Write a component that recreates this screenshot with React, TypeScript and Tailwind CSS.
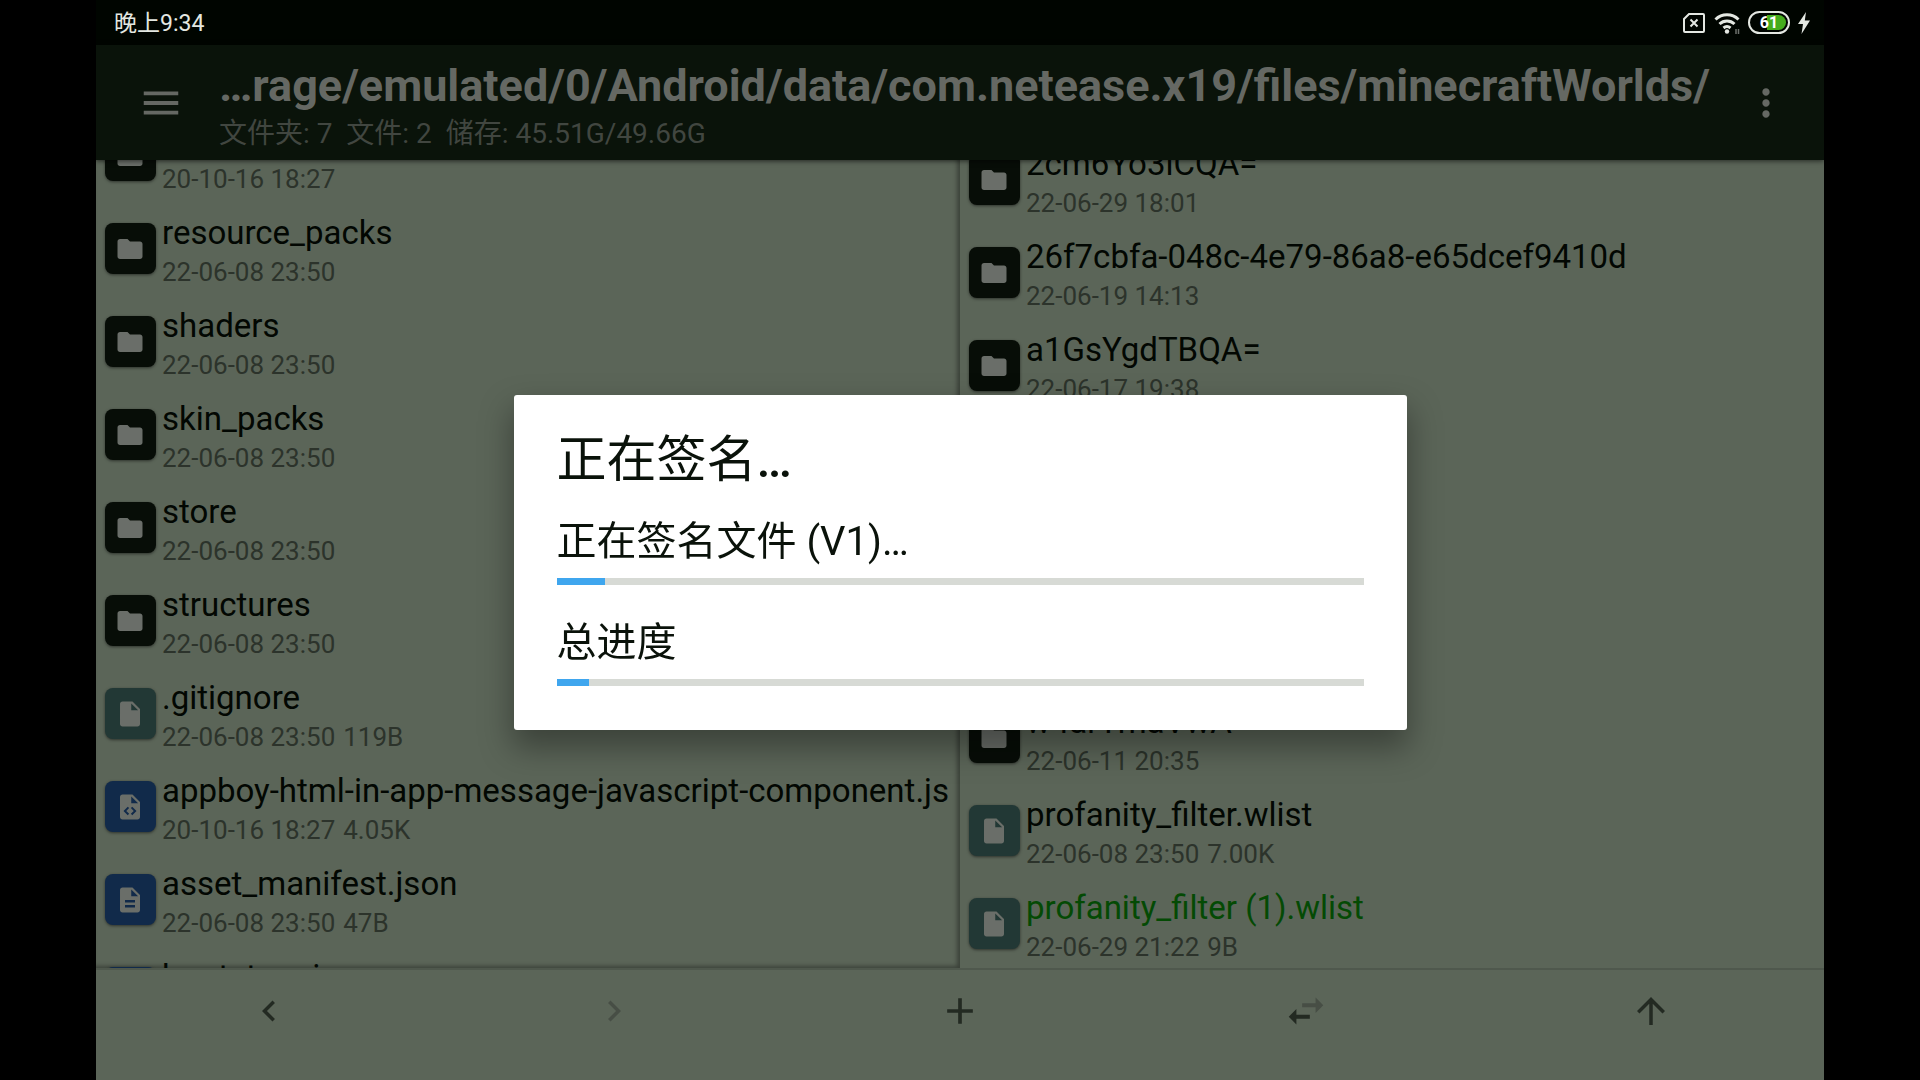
import { MdAdd, MdArrowUpward, MdChevronLeft, MdChevronRight, MdFolder, MdInsertDriveFile, MdDescription, MdMenu, MdMoreVert } from "react-icons/md";

type Kind = "folder" | "file" | "code" | "text";

interface Entry {
  kind: Kind;
  name: string;
  date: string;
  size?: string;
  added?: boolean;
}

const leftEntries: Entry[] = [
  { kind: "folder", name: "", date: "20-10-16 18:27" },
  { kind: "folder", name: "resource_packs", date: "22-06-08 23:50" },
  { kind: "folder", name: "shaders", date: "22-06-08 23:50" },
  { kind: "folder", name: "skin_packs", date: "22-06-08 23:50" },
  { kind: "folder", name: "store", date: "22-06-08 23:50" },
  { kind: "folder", name: "structures", date: "22-06-08 23:50" },
  { kind: "file", name: ".gitignore", date: "22-06-08 23:50", size: "119B" },
  { kind: "code", name: "appboy-html-in-app-message-javascript-component.js", date: "20-10-16 18:27", size: "4.05K" },
  { kind: "text", name: "asset_manifest.json", date: "22-06-08 23:50", size: "47B" },
  { kind: "text", name: "bootstrap.js", date: "" },
];

const rightEntries: Entry[] = [
  { kind: "folder", name: "2cm6Yo3lCQA=", date: "22-06-29 18:01" },
  { kind: "folder", name: "26f7cbfa-048c-4e79-86a8-e65dcef9410d", date: "22-06-19 14:13" },
  { kind: "folder", name: "a1GsYgdTBQA=", date: "22-06-17 19:38" },
  { kind: "folder", name: "", date: "" },
  { kind: "folder", name: "", date: "" },
  { kind: "folder", name: "", date: "" },
  { kind: "folder", name: "w4arYmaVwA=", date: "22-06-11 20:35" },
  { kind: "file", name: "profanity_filter.wlist", date: "22-06-08 23:50", size: "7.00K" },
  { kind: "file", name: "profanity_filter (1).wlist", date: "22-06-29 21:22", size: "9B", added: true },
];

const tileColors: Record<Kind, string> = {
  folder: "bg-[#070d07]",
  file: "bg-[#223835]",
  code: "bg-[#112a4a]",
  text: "bg-[#112a4a]",
};

function CodeFileIcon() {
  return (
    <svg viewBox="0 0 24 24" fill="currentColor" className="size-[30px]">
      <path
        fillRule="evenodd"
        d="M6 2c-1.1 0-2 .9-2 2v16c0 1.1.9 2 2 2h12c1.1 0 2-.9 2-2V8l-6-6H6zm7 7V3.5L18.5 9H13zM10.2 11.7l1.1 1.1L9 15.1l2.3 2.3-1.1 1.1-3.4-3.4 3.4-3.4zm3.6 0 3.4 3.4-3.4 3.4-1.1-1.1 2.3-2.3-2.3-2.3 1.1-1.1z"
      />
    </svg>
  );
}

function KindIcon({ kind }: { kind: Kind }) {
  if (kind === "folder") return <MdFolder size={30} />;
  if (kind === "file") return <MdInsertDriveFile size={30} />;
  if (kind === "code") return <CodeFileIcon />;
  return <MdDescription size={30} />;
}

function EntryRow({ entry }: { entry: Entry }) {
  return (
    <li className="flex h-[93px] shrink-0 items-start gap-1.5 pl-[9px]">
      <span
        className={`mt-2.5 flex size-[51px] shrink-0 items-center justify-center rounded-lg pr-0.5 text-[#6a6e69] shadow-[0_1px_3px_rgba(0,0,0,0.5)] ${tileColors[entry.kind]}`}
      >
        <KindIcon kind={entry.kind} />
      </span>
      <div className="whitespace-nowrap">
        <p className={`h-[41px] text-[33px] leading-10 ${entry.added ? "text-[#044a04]" : "text-[#020702]"}`}>{entry.name}</p>
        <p className="flex h-9 gap-2 text-[26px] leading-9 text-[#2c332b]">
          <span>{entry.date}</span>
          {entry.size && <span>{entry.size}</span>}
        </p>
      </div>
    </li>
  );
}

function SwapIcon() {
  return (
    <svg viewBox="0 0 24 24" className="size-[46px]">
      <path fill="#232a22" d="M6.99 11 3 15l3.99 4v-3H14v-2H6.99v-3z" />
      <path fill="#474e45" d="M21 9l-3.99-4v3H10v2h7.01v3L21 9z" />
    </svg>
  );
}

function StatusIcons() {
  return (
    <div className="flex items-center gap-2 text-[#e4e8e2]">
      <svg viewBox="0 0 24 24" fill="none" stroke="currentColor" strokeWidth="2" className="size-6">
        <path d="M7 3h14a1 1 0 0 1 1 1v16a1 1 0 0 1-1 1H3a1 1 0 0 1-1-1V8z" />
        <path d="m8.500 8.500 7 7m0-7-7 7" />
      </svg>
      <svg viewBox="0 0 26 24" fill="none" stroke="currentColor" strokeWidth="3" className="h-6 w-[26px]">
        <path d="M1.500 8.500a16.500 16.500 0 0 1 23 0M5.500 13a11 11 0 0 1 15 0M9.500 17a5.500 5.500 0 0 1 7 0" />
        <circle cx="13" cy="20.500" r="2.200" fill="currentColor" stroke="none" />
        <path d="M22 18v5M24.500 18v5" stroke="#6c706b" strokeWidth="1.500" />
      </svg>
      <div className="flex h-[23px] w-[42px] items-center rounded-full border-2 border-current p-0.5">
        <div className="flex h-full w-full items-center justify-center rounded-full bg-linear-to-r from-transparent from-45% to-[#45ac1c] to-45% text-base font-bold text-white">
          61
        </div>
      </div>
      <svg viewBox="0 0 12 22" fill="currentColor" className="h-[22px] w-3">
        <path d="M8 0 0 12h5l-1.500 10L12 8.500H6.800z" />
      </svg>
    </div>
  );
}

function ProgressItem({ id, label, value }: { id: string; label: string; value: number }) {
  return (
    <div>
      <p id={id} className="text-[40px] leading-[60px]">
        {label}
      </p>
      <div
        role="progressbar"
        aria-labelledby={id}
        aria-valuenow={value}
        aria-valuemin={0}
        aria-valuemax={100}
        className="mt-1.5 h-[7px] bg-[#d7dad5]"
      >
        <div className="h-full bg-[#3fa6ee]" style={{ width: `${value}%` }} />
      </div>
    </div>
  );
}

export default function App() {
  return (
    <div className="h-screen bg-black px-24 font-[Roboto,'Noto_Sans_CJK_SC',sans-serif]">
      <div className="flex h-full flex-col overflow-hidden bg-[#5b6558]">
        {/* System status bar */}
        <div className="flex h-[45px] shrink-0 items-center justify-between bg-[#000500] pr-3.5 pl-[18px]">
          <span className="pt-1 text-[23px] text-[#e4e8e2]">晚上9:34</span>
          <StatusIcons />
        </div>

        {/* App bar */}
        <header className="z-10 flex h-[115px] shrink-0 items-center bg-[#0a130a] pr-9 pl-[42px] text-[#656863] shadow-[0_1px_5px_rgba(0,0,0,0.6)]">
          <button type="button" aria-label="菜单">
            <MdMenu size={46} />
          </button>
          <div className="ml-[35px] min-w-0 flex-1 pt-2 whitespace-pre">
            <h1 className="text-[45px] leading-[54px] font-bold">…rage/emulated/0/Android/data/com.netease.x19/files/minecraftWorlds/</h1>
            <p className="text-[28px] leading-[42px] text-[#414640]">文件夹: 7  文件: 2  储存: 45.51G/49.66G</p>
          </div>
          <button type="button" aria-label="更多">
            <MdMoreVert size={44} />
          </button>
        </header>

        {/* Two file panes */}
        <main className="grid min-h-0 flex-1 grid-cols-2">
          <section className="overflow-hidden shadow-[inset_-3px_-2px_4px_rgba(0,0,0,0.35)]">
            <ul className="-mt-10 flex flex-col">
              {leftEntries.map((entry, i) => (
                <EntryRow key={i} entry={entry} />
              ))}
            </ul>
          </section>
          <section className="overflow-hidden">
            <ul className="-mt-4 flex flex-col">
              {rightEntries.map((entry, i) => (
                <EntryRow key={i} entry={entry} />
              ))}
            </ul>
          </section>
        </main>

        {/* Bottom toolbar */}
        <nav className="grid h-28 shrink-0 grid-cols-5 border-t-2 border-[#4f584d] pb-7 text-[#232a22]">
          <button type="button" aria-label="后退" className="flex items-center justify-center">
            <MdChevronLeft size={42} />
          </button>
          <button type="button" aria-label="前进" className="flex items-center justify-center text-[#474e45]">
            <MdChevronRight size={42} />
          </button>
          <button type="button" aria-label="新建" className="flex items-center justify-center">
            <MdAdd size={44} />
          </button>
          <button type="button" aria-label="交换" className="flex items-center justify-center">
            <SwapIcon />
          </button>
          <button type="button" aria-label="上级" className="flex items-center justify-center">
            <MdArrowUpward size={42} />
          </button>
        </nav>
      </div>

      {/* Signing dialog */}
      <div className="fixed inset-0 z-20 flex items-center justify-center pt-[45px]">
        <div
          role="dialog"
          aria-labelledby="dialog-title"
          className="w-[893px] rounded-[3px] bg-white px-[43px] pt-7 pb-11 text-[#0a120a] shadow-[0_16px_32px_2px_rgba(0,0,0,0.35)]"
        >
          <h2 id="dialog-title" className="text-[50px] leading-[75px]">
            正在签名<span className="font-medium">…</span>
          </h2>
          <div className="mt-3.5 flex flex-col gap-7">
            <ProgressItem id="file-progress" label="正在签名文件 (V1)…" value={6} />
            <ProgressItem id="total-progress" label="总进度" value={4} />
          </div>
        </div>
      </div>
    </div>
  );
}
